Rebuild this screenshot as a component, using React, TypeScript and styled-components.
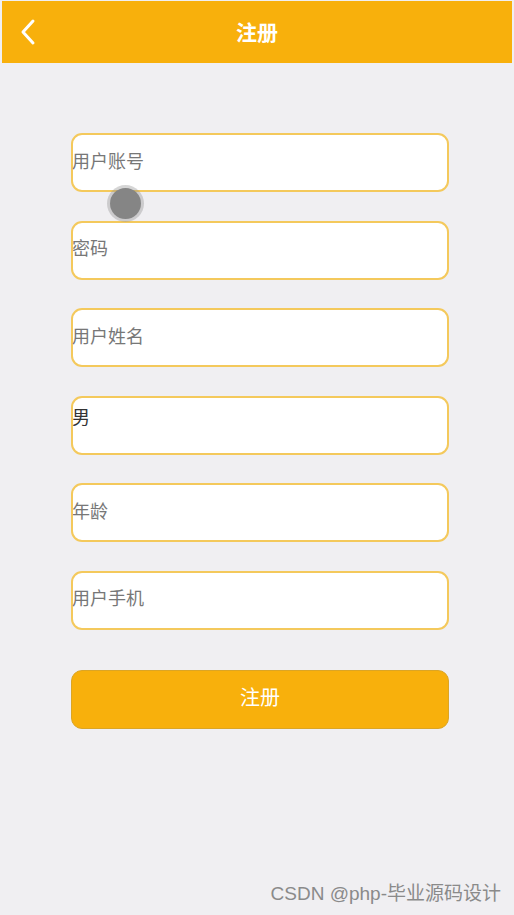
import React from "react";
import styled, { createGlobalStyle } from "styled-components";

const Global = createGlobalStyle`
  html, body { margin: 0; padding: 0; background: #f0eff2; }
  body { font-family: "Noto Sans CJK SC", "Noto Sans", sans-serif; }
  * { box-sizing: border-box; }
`;

const Page = styled.div`
  position: relative;
  width: 514px;
  height: 915px;
  background: #f0eff2;
  padding: 1px 2px 0 2px;
  display: flex;
  flex-direction: column;
`;

const Header = styled.header`
  height: 62px;
  background: #f8b00c;
  display: grid;
  grid-template-columns: 60px 1fr 60px;
  align-items: center;
`;

const Back = styled.div`
  display: flex;
  align-items: center;
  padding-left: 18px;
  color: #fff;
`;

const Title = styled.h1`
  margin: 0 0 2px 0;
  text-align: center;
  color: #fff;
  font-size: 21px;
  font-weight: 700;
`;

const Form = styled.div`
  display: flex;
  flex-direction: column;
  padding: 70px 0 0 69px;
  gap: 28.5px;
`;

const Field = styled.div<{ $top?: boolean }>`
  width: 378px;
  height: 59px;
  background: #fff;
  border: 2px solid #f4c95c;
  border-radius: 11px;
  display: flex;
  align-items: ${(p) => (p.$top ? "flex-start" : "center")};
  padding-top: ${(p) => (p.$top ? "9px" : "0")};
  padding-bottom: ${(p) => (p.$top ? "0" : "6px")};
`;

const Label = styled.span<{ $value?: boolean }>`
  font-size: 18px;
  color: ${(p) => (p.$value ? "#333" : "#777")};
  line-height: 1;
  margin-left: -1px;
`;

const Button = styled.div`
  margin-top: 12px;
  width: 378px;
  height: 59px;
  background: #f8b00c;
  border: 1px solid #dba525;
  border-radius: 11px;
  display: flex;
  align-items: center;
  justify-content: center;
  padding-bottom: 6px;
  color: #fff;
  font-size: 20px;
`;

const Touch = styled.div`
  position: absolute;
  left: 110px;
  top: 188px;
  width: 31px;
  height: 31px;
  border-radius: 50%;
  background: #858585;
  box-shadow: 0 0 0 3px rgba(150, 150, 150, 0.4);
`;

const Watermark = styled.div`
  position: absolute;
  right: 13px;
  bottom: 10px;
  font-size: 19px;
  color: #8a8a8a;
  font-family: "Liberation Sans", "Noto Sans CJK SC", sans-serif;
`;

const fields: { label: string; value?: boolean }[] = [
  { label: "用户账号" },
  { label: "密码" },
  { label: "用户姓名" },
  { label: "男", value: true },
  { label: "年龄" },
  { label: "用户手机" },
];

export default function App() {
  return (
    <Page>
      <Global />
      <Header>
        <Back>
          <svg width="16" height="28" viewBox="0 0 16 28" fill="none">
            <path d="M13 3 L3 14 L13 25" stroke="#fff" strokeWidth="3" strokeLinecap="round" strokeLinejoin="round" />
          </svg>
        </Back>
        <Title>注册</Title>
        <div />
      </Header>
      <Form>
        {fields.map((f) => (
          <Field key={f.label} $top={f.value}>
            <Label $value={f.value}>{f.label}</Label>
          </Field>
        ))}
        <Button>注册</Button>
      </Form>
      <Touch />
      <Watermark>CSDN @php-毕业源码设计</Watermark>
    </Page>
  );
}
